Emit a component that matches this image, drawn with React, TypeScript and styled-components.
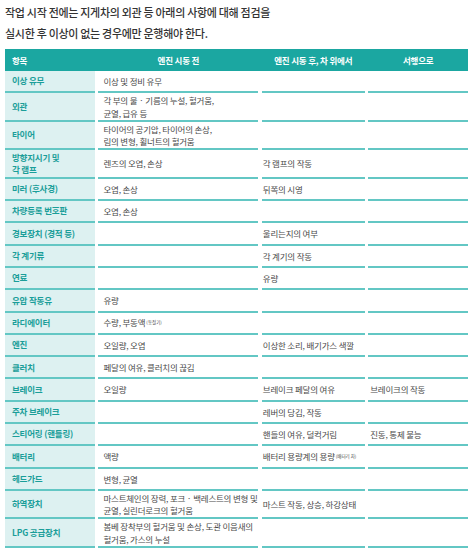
import * as React from "react";
import styled, { createGlobalStyle } from "styled-components";

const GlobalStyle = createGlobalStyle`
  html, body {
    margin: 0;
    padding: 0;
    background: #ffffff;
  }
  body {
    font-family: "Noto Sans CJK KR", "Noto Sans", sans-serif;
    color: #444444;
  }
`;

const TEAL = "#1ba7a1";
const LINE = "#63c7c4";
const LABEL_BG = "#ddf1f1";

interface IRow {
  label: React.ReactNode;
  before?: React.ReactNode;
  after?: React.ReactNode;
  slow?: React.ReactNode;
  tall?: boolean;
}

const Sup = styled.sup`
  font-size: 4.5px;
  vertical-align: 4px;
  letter-spacing: 0;
  margin-left: 1px;
`;

const rows: IRow[] = [
  { label: "이상 유무", before: "이상 및 정비 유무" },
  {
    label: "외관",
    before: (
      <>
        각 부의 물 · 기름의 누설, 헐거움,
        <br />
        균열, 급유 등
      </>
    ),
    tall: true
  },
  {
    label: "타이어",
    before: (
      <>
        타이어의 공기압, 타이어의 손상,
        <br />
        림의 변형, 휠너트의 헐거움
      </>
    ),
    tall: true
  },
  {
    label: (
      <>
        방향지시기 및
        <br />각 램프
      </>
    ),
    before: "렌즈의 오염, 손상",
    after: "각 램프의 작동",
    tall: true
  },
  { label: "미러 (후사경)", before: "오염, 손상", after: "뒤쪽의 시영" },
  { label: "차량등록 번호판", before: "오염, 손상" },
  { label: "경보장치 (경적 등)", after: "울리는지의 여부" },
  { label: "각 계기류", after: "각 계기의 작동" },
  { label: "연료", after: "유량" },
  { label: "유압 작동유", before: "유량" },
  {
    label: "라디에이터",
    before: (
      <>
        수량, 부동액<Sup>(동절기)</Sup>
      </>
    )
  },
  { label: "엔진", before: "오일량, 오염", after: "이상한 소리, 배기가스 색깔" },
  { label: "클러치", before: "페달의 여유, 클러치의 끊김" },
  {
    label: "브레이크",
    before: "오일량",
    after: "브레이크 페달의 여유",
    slow: "브레이크의 작동"
  },
  { label: "주차 브레이크", after: "레버의 당김, 작동" },
  {
    label: "스티어링 (핸들링)",
    after: "핸들의 여유, 덜컥거림",
    slow: "진동, 통제 불능"
  },
  {
    label: "배터리",
    before: "액량",
    after: (
      <>
        배터리 용량계의 용량<Sup>(배터리 차)</Sup>
      </>
    )
  },
  { label: "헤드가드", before: "변형, 균열" },
  {
    label: "하역장치",
    before: (
      <>
        마스트체인의 장력, 포크 · 백레스트의 변형 및
        <br />
        균열, 실린더로크의 헐거움
      </>
    ),
    after: "마스트 작동, 상승, 하강상태",
    tall: true
  },
  {
    label: "LPG 공급장치",
    before: (
      <>
        봄베 장착부의 헐거움 및 손상, 도관 이음새의
        <br />
        헐거움, 가스의 누설
      </>
    ),
    tall: true
  }
];

export default function App() {
  return (
    <Page>
      <GlobalStyle />
      <Intro>
        작업 시작 전에는 지게차의 외관 등 아래의 사항에 대해 점검을
        <br />
        실시한 후 이상이 없는 경우에만 운행해야 한다.
      </Intro>
      <Table>
        <HeadRow>
          <HeadCell $align="left">항목</HeadCell>
          <HeadCell>엔진 시동 전</HeadCell>
          <HeadCell>엔진 시동 후, 차 위에서</HeadCell>
          <HeadCell>서행으로</HeadCell>
        </HeadRow>
        {rows.map((row, i) => (
          <BodyRow key={i} $tall={row.tall}>
            <LabelCell>{row.label}</LabelCell>
            <Cell $pad={5}>{row.before}</Cell>
            <Cell $pad={1}>{row.after}</Cell>
            <Cell $pad={2}>{row.slow}</Cell>
          </BodyRow>
        ))}
      </Table>
    </Page>
  );
}

const Page = styled.div`
  width: 474px;
  padding: 2px 0 0 5px;
  box-sizing: border-box;
`;

const Intro = styled.p`
  margin: 0 0 5px;
  font-size: 11px;
  line-height: 21px;
  font-weight: 500;
  letter-spacing: -0.3px;
  color: #333333;
`;

const Table = styled.div`
  width: 463px;
  display: flex;
  flex-direction: column;
`;

const columns = `
  display: grid;
  grid-template-columns: 90px 160px 103px 100px;
  column-gap: 3.4px;
`;

const HeadRow = styled.div`
  ${columns}
  height: 22px;
  background: ${TEAL};
  align-items: center;
`;

const HeadCell = styled.div<{ $align?: "left" | "center" }>`
  color: #ffffff;
  font-size: 8.5px;
  font-weight: 700;
  letter-spacing: -0.2px;
  text-align: ${(p) => p.$align || "center"};
  padding-left: ${(p) => (p.$align === "left" ? "7px" : "0")};
  white-space: nowrap;
`;

const BodyRow = styled.div<{ $tall?: boolean }>`
  ${columns}
  height: ${(p) => (p.$tall ? "28.5px" : "22.3px")};
`;

const BaseCell = styled.div`
  display: flex;
  align-items: center;
  border-bottom: 2px solid ${LINE};
  font-size: 8.5px;
  line-height: 12.5px;
  letter-spacing: -0.2px;
  white-space: nowrap;
  box-sizing: border-box;
`;

const LabelCell = styled(BaseCell)`
  background: ${LABEL_BG};
  color: #1a9e99;
  font-weight: 700;
  padding-left: 7px;
  line-height: 11.5px;
`;

const Cell = styled(BaseCell)<{ $pad: number }>`
  color: #4a4a4a;
  padding-left: ${(p) => p.$pad}px;
`;
